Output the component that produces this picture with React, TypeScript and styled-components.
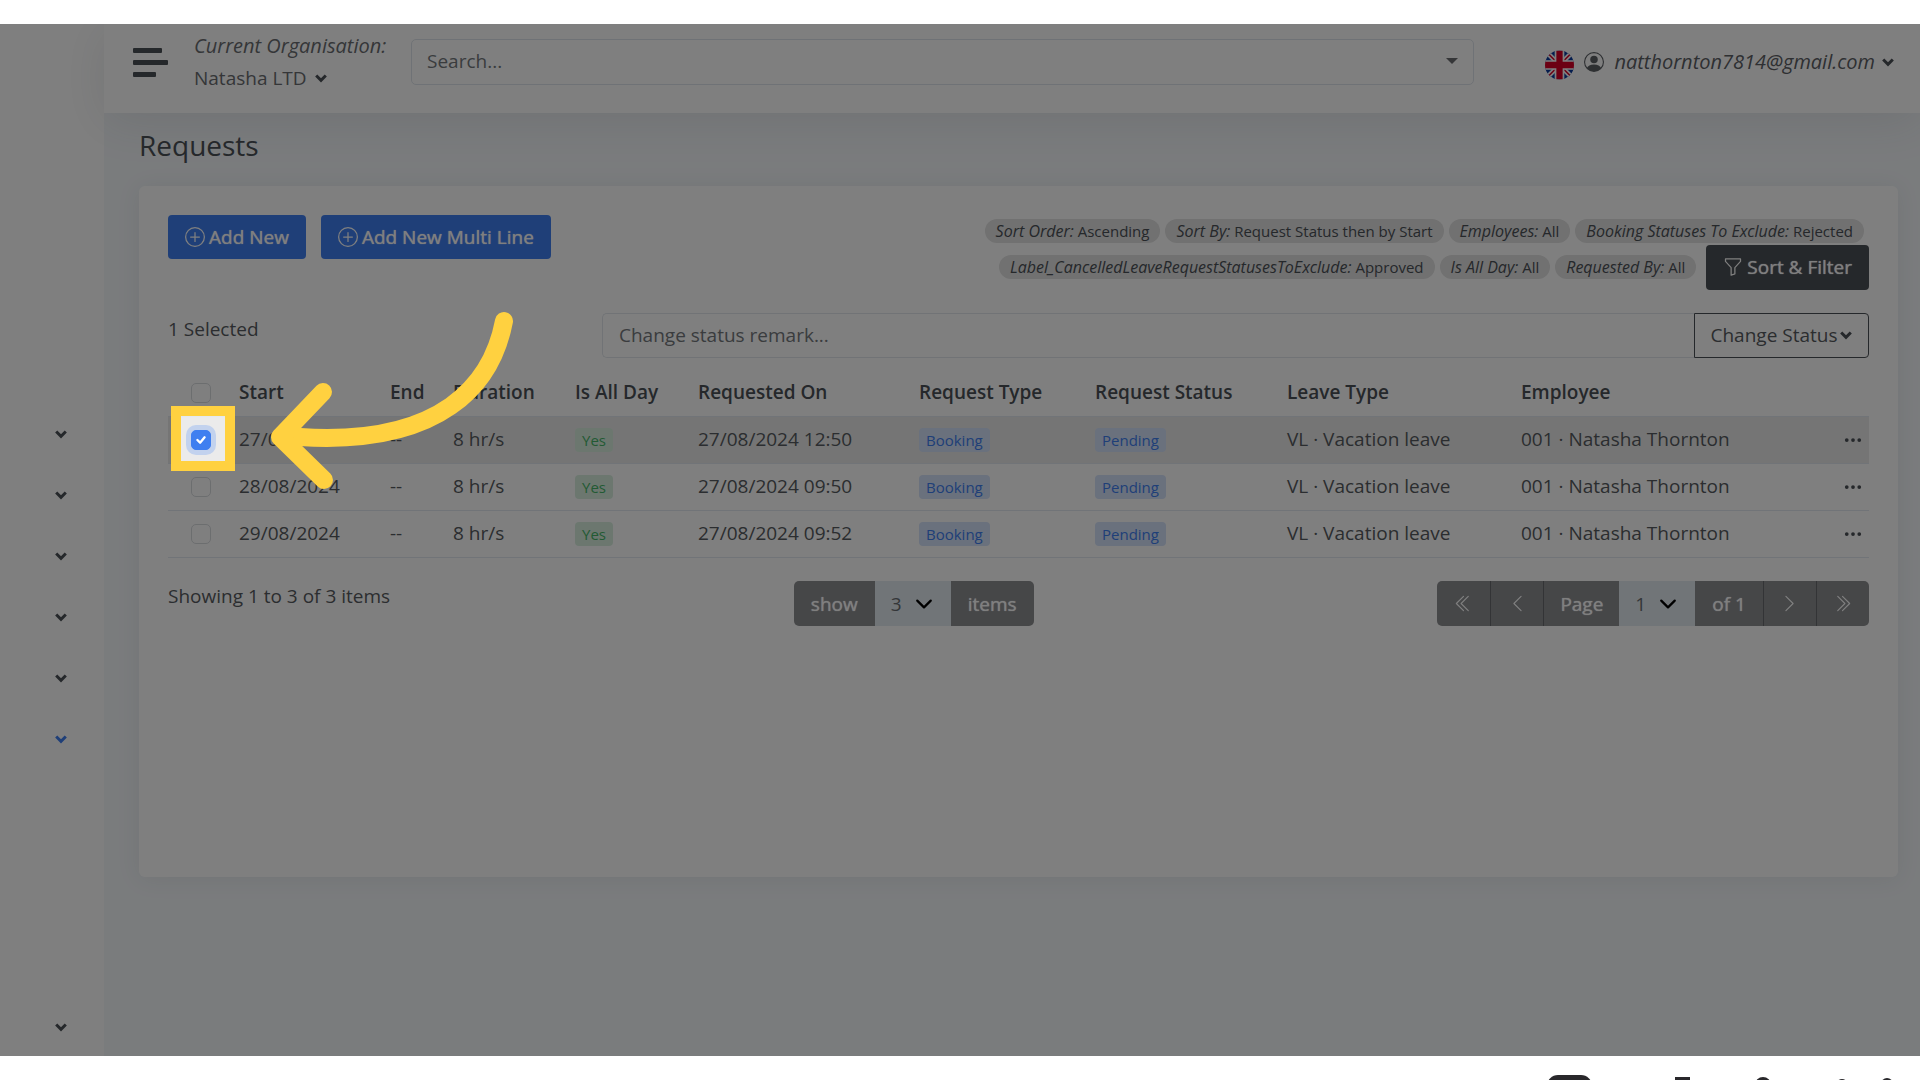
import React, { useState } from "react";
import styled, { createGlobalStyle } from "styled-components";
import {
  BsPlusCircle,
  BsFunnel,
  BsPersonCircle,
  BsThreeDots,
  BsChevronDoubleLeft,
  BsChevronLeft,
  BsChevronRight,
  BsChevronDoubleRight,
} from "react-icons/bs";

const font = `"Open Sans", "Noto Sans", sans-serif`;

const Global = createGlobalStyle`
  *, *::before, *::after { box-sizing: border-box; }
  body { margin: 0; background: #fff; font-family: ${font}; overflow: hidden; }
  button, input, select { font: inherit; color: inherit; }
`;

const Page = styled.div`
  display: flex;
  flex-direction: column;
  height: 100vh;
  padding-top: 24px;
  overflow: hidden;
  color: #575b60;
  font-size: 19px;
  line-height: 28px;
`;

const Screen = styled.div`
  position: relative;
  flex: 1;
  display: flex;
  min-height: 0;
  overflow: hidden;
  background: #f5f8fb;
`;

const Sidebar = styled.nav`
  flex: none;
  width: 104px;
  padding: 379px 31px 15px 48px;
  display: flex;
  flex-direction: column;
  background: #fff;
`;

const SideButton = styled.button<{ $active?: boolean; $last?: boolean }>`
  display: flex;
  align-items: center;
  justify-content: center;
  width: 25px;
  height: ${(p) => (p.$last ? 28 : 61)}px;
  padding: 0;
  border: 0;
  background: none;
  color: ${(p) => (p.$active ? "#3f7ff0" : "#4b5056")};
  margin-top: ${(p) => (p.$last ? "auto" : "0")};
`;

const Main = styled.div`
  flex: 1;
  min-width: 0;
  display: flex;
  flex-direction: column;
`;

const Header = styled.header`
  display: flex;
  align-items: flex-start;
  height: 89px;
  padding: 0 26px 0 29px;
  background: #fff;
  box-shadow: 0 8px 48px rgba(40, 50, 60, 0.1);
`;

const MenuButton = styled.button`
  display: flex;
  flex-direction: column;
  gap: 7px;
  width: 35px;
  margin: 24px 26px 0 0;
  padding: 0;
  border: 0;
  background: none;
`;

const MenuBar = styled.span<{ $w: number }>`
  width: ${(p) => p.$w}px;
  height: 5px;
  border-radius: 1px;
  background: #4b5056;
`;

const Organisation = styled.div`
  width: 217px;
  padding-top: 6px;
  line-height: 32px;
  color: #6a6d71;
  white-space: nowrap;
`;

const Italic = styled.em`
  display: block;
  font-size: 20px;
`;

const PlainButton = styled.button`
  display: flex;
  align-items: center;
  gap: 8px;
  padding: 0;
  border: 0;
  background: none;
  line-height: inherit;
  & > svg { color: #4b5056; }
`;

const SearchBox = styled.div`
  display: flex;
  align-items: center;
  flex: 1;
  height: 46px;
  margin: 15px 71px 0 0;
  padding: 0 15px 2px;
  border: 1px solid #dfe5ec;
  border-radius: 5px;
`;

const TextInput = styled.input`
  flex: 1;
  min-width: 0;
  padding: 0;
  border: 0;
  outline: 0;
  background: none;
  &::placeholder { color: #74787d; opacity: 1; }
`;

const Caret = styled.span`
  border: 6px solid transparent;
  border-top-color: #6a6d71;
  border-bottom: 0;
`;

const Account = styled.div`
  display: flex;
  align-items: center;
  gap: 10px;
  margin-top: 21px;
  height: 34px;
  color: #5c6065;
`;

const AccountButton = styled(PlainButton)`
  gap: 7px;
  font-size: 20px;
  font-style: italic;
`;

const FlagSlot = styled.span`
  display: flex;
  padding-top: 6px;
`;

const Content = styled.main`
  display: flex;
  flex-direction: column;
  flex: 1;
  padding: 13px 22px 179px 35px;
`;

const Title = styled.h1`
  margin: 0 0 22px;
  color: #4b5056;
  font-size: 28px;
  font-weight: 400;
  line-height: 38px;
`;

const Card = styled.section`
  flex: 1;
  padding: 28px 29px;
  border-radius: 6px;
  background: #fff;
  box-shadow: 0 2px 24px rgba(40, 50, 60, 0.08);
`;

const Toolbar = styled.div`
  display: flex;
  align-items: flex-start;
  justify-content: space-between;
`;

const ButtonRow = styled.div`
  display: flex;
  gap: 15px;
  padding-top: 1px;
`;

const Button = styled.button<{ $dark?: boolean }>`
  display: inline-flex;
  align-items: center;
  gap: 4px;
  height: ${(p) => (p.$dark ? 45 : 44)}px;
  padding: 0 17px 1px;
  border: 0;
  border-radius: 4px;
  background: ${(p) => (p.$dark ? "#4b5056" : "#3f7ff0")};
  color: #fff;
  font-weight: 500;
  text-shadow: 0 0 1px currentColor;
  white-space: nowrap;
`;

const Filters = styled.div`
  display: flex;
  flex-direction: column;
  align-items: flex-end;
  padding-top: 5px;
`;

const FilterLine = styled.div<{ $inset?: boolean }>`
  display: flex;
  align-items: center;
  gap: 5px;
  padding-right: ${(p) => (p.$inset ? 5 : 0)}px;
`;

const FilterAction = styled.div`
  padding: 2px 0 0 5px;
`;

const Pill = styled.span`
  height: 24px;
  padding: 0 11px;
  border-radius: 12px;
  background: #e2e2e2;
  color: #4b5056;
  font-size: 15px;
  line-height: 24px;
  white-space: nowrap;
  & > em { font-size: 16px; }
`;

const StatusRow = styled.div`
  display: flex;
  align-items: flex-start;
  margin-top: 23px;
`;

const Selected = styled.div`
  width: 434px;
  padding-top: 2px;
`;

const RemarkBox = styled.label`
  display: flex;
  flex: 1;
  height: 45px;
  padding: 0 16px 2px;
  border: 1px solid #e3e7ec;
  border-right: 0;
  border-radius: 5px 0 0 5px;
`;

const StatusButton = styled.button`
  display: flex;
  align-items: center;
  justify-content: center;
  gap: 3px;
  width: 175px;
  height: 45px;
  padding: 0 0 2px;
  border: 1px solid #4b5056;
  border-radius: 0 4px 4px 0;
  background: #fff;
  & > svg { color: #4b5056; }
`;

const Table = styled.table`
  width: 100%;
  margin-top: 11px;
  border-collapse: separate;
  border-spacing: 0;
  table-layout: fixed;
`;

const Th = styled.th`
  height: 48px;
  padding: 0 0 2px;
  border-bottom: 1px solid #e3e9f0;
  color: #4b5056;
  font-weight: 600;
  text-align: left;
  white-space: nowrap;
`;

const Tr = styled.tr<{ $selected?: boolean }>`
  background: ${(p) => (p.$selected ? "#ebebeb" : "transparent")};
`;

const Td = styled.td`
  height: 47px;
  padding: 0 0 3px;
  border-bottom: 1px solid #e3e9f0;
  white-space: nowrap;
`;

const CheckHead = styled(Th)`
  padding: 0 0 0 23px;
`;

const CheckCell = styled(Td)`
  padding: 0 0 0 23px;
`;

const EndCell = styled(Td)`
  padding-right: 6px;
  text-align: right;
`;

const Checkbox = styled.input`
  appearance: none;
  display: block;
  width: 20px;
  height: 20px;
  margin: 0;
  border: 1px solid #d9dcdf;
  border-radius: 5px;
  background: #fff;
  &:checked {
    border-color: #3f7ff0;
    background: #3f7ff0 url("data:image/svg+xml,%3Csvg xmlns='http://www.w3.org/2000/svg' viewBox='0 0 20 20'%3E%3Cpath fill='none' stroke='%23fff' stroke-width='2.6' stroke-linecap='round' stroke-linejoin='round' d='m6 10 3 3 5-6'/%3E%3C/svg%3E") center / 18px no-repeat;
    box-shadow: 0 0 0 5px #c2d2ee;
  }
`;

const Badge = styled.span<{ $green?: boolean }>`
  display: inline-block;
  padding: 0 7px;
  border-radius: 4px;
  background: ${(p) => (p.$green ? "#d9efdf" : "#d4e2fa")};
  color: ${(p) => (p.$green ? "#46b569" : "#3f7ff0")};
  font-size: 15px;
  line-height: 24px;
  vertical-align: middle;
`;

const IconButton = styled.button`
  padding: 0;
  border: 0;
  background: none;
  color: #4b5056;
  line-height: 0;
  vertical-align: middle;
`;

const TableFooter = styled.div`
  display: flex;
  align-items: flex-start;
  justify-content: space-between;
  margin-top: 23px;
`;

const Summary = styled.span`
  padding-top: 1px;
`;

const Group = styled.div`
  display: flex;
  height: 45px;
  overflow: hidden;
  border-radius: 5px;
`;

const PageButton = styled.button`
  display: flex;
  align-items: center;
  justify-content: center;
  width: 53px;
  padding: 0;
  border: 0;
  border-left: 1px solid #66696c;
  background: #8c8e91;
  color: #fff;
  &:first-child { border-left: 0; }
`;

const GroupText = styled.span`
  display: flex;
  align-items: center;
  padding: 0 17px;
  background: #8c8e91;
  color: #fff;
  text-shadow: 0 0 1px currentColor;
  ${PageButton} + & { border-left: 1px solid #66696c; padding: 0 16px; }
`;

const SelectWrap = styled.span`
  display: grid;
  align-items: center;
  width: 76px;
  background: #e2eaf0;
  color: #696d72;
  & > * { grid-area: 1 / 1; }
  & > svg { justify-self: end; margin-right: 18px; pointer-events: none; }
`;

const Select = styled.select`
  appearance: none;
  width: 100%;
  height: 100%;
  padding: 0 16px;
  border: 0;
  background: none;
`;

const Spotlight = styled.div`
  position: absolute;
  left: 171px;
  top: 382px;
  width: 64px;
  height: 65px;
  border: 10px solid #ffd140;
  box-shadow: 0 0 0 3000px rgba(0, 0, 0, 0.5);
  pointer-events: none;
`;

const Arrow = styled.svg`
  position: absolute;
  left: 260px;
  top: 276px;
  pointer-events: none;
`;

const Footer = styled.footer`
  flex: none;
  display: flex;
  justify-content: flex-end;
  height: 24px;
  overflow: hidden;
  background: #fff;
`;

const Chevron = () => (
  <svg width="12" height="12" viewBox="0 0 12 12" fill="none" stroke="currentColor" strokeWidth="3" aria-hidden="true">
    <path d="M1.200 3.500 6 8.300l4.800-4.800" />
  </svg>
);

const SelectArrow = () => (
  <svg width="18" height="18" viewBox="0 0 16 16" fill="none" stroke="#000" strokeWidth="2" strokeLinecap="round" strokeLinejoin="round" aria-hidden="true">
    <path d="m2 5 6 6 6-6" />
  </svg>
);

const Flag = () => (
  <svg width="29" height="30" viewBox="0 0 60 60" role="img" aria-label="English">
    <clipPath id="round"><circle cx="30" cy="30" r="30" /></clipPath>
    <g clipPath="url(#round)">
      <path fill="#0a3a9c" d="M0 0h60v60H0z" />
      <path stroke="#fff" strokeWidth="10" d="m0 0 60 60M60 0 0 60" />
      <path stroke="#d80027" strokeWidth="3" d="m0 0 60 60M60 0 0 60" />
      <path stroke="#fff" strokeWidth="20" d="M30 0v60M0 30h60" />
      <path stroke="#d80027" strokeWidth="13" d="M30 0v60M0 30h60" />
    </g>
  </svg>
);

const columns = [
  { name: "Start", width: 151 },
  { name: "End", width: 63 },
  { name: "Duration", width: 122 },
  { name: "Is All Day", width: 123 },
  { name: "Requested On", width: 221 },
  { name: "Request Type", width: 176 },
  { name: "Request Status", width: 192 },
  { name: "Leave Type", width: 234 },
  { name: "Employee", width: 290 },
];

const rows = [
  { start: "27/08/2024", on: "27/08/2024 12:50" },
  { start: "28/08/2024", on: "27/08/2024 09:50" },
  { start: "29/08/2024", on: "27/08/2024 09:52" },
];

const filterLines = [
  [
    ["Sort Order:", "Ascending"],
    ["Sort By:", "Request Status then by Start"],
    ["Employees:", "All"],
    ["Booking Statuses To Exclude:", "Rejected"],
  ],
  [
    ["Label_CancelledLeaveRequestStatusesToExclude:", "Approved"],
    ["Is All Day:", "All"],
    ["Requested By:", "All"],
  ],
];

const Pills = ({ items }: { items: string[][] }) => (
  <>
    {items.map(([label, value]) => (
      <Pill key={label}><em>{label}</em> {value}</Pill>
    ))}
  </>
);

const SideMenu = () => (
  <Sidebar aria-label="Main menu">
    {["Organisation", "Employees", "Leave", "Attendance", "Payroll"].map((n) => (
      <SideButton key={n} aria-label={n}><Chevron /></SideButton>
    ))}
    <SideButton $active aria-label="Requests"><Chevron /></SideButton>
    <SideButton $last aria-label="Settings"><Chevron /></SideButton>
  </Sidebar>
);

export default function App() {
  const [checked, setChecked] = useState([true, false, false]);
  const toggle = (i: number) => setChecked(checked.map((c, n) => (n === i ? !c : c)));

  return (
    <Page>
      <Global />
      <Screen>
        <SideMenu />
        <Main>
          <Header>
            <MenuButton aria-label="Toggle menu">
              <MenuBar $w={29} />
              <MenuBar $w={35} />
              <MenuBar $w={23} />
            </MenuButton>
            <Organisation>
              <Italic>Current Organisation:</Italic>
              <PlainButton>Natasha LTD <Chevron /></PlainButton>
            </Organisation>
            <SearchBox>
              <TextInput aria-label="Search" placeholder="Search..." />
              <Caret />
            </SearchBox>
            <Account>
              <FlagSlot><Flag /></FlagSlot>
              <BsPersonCircle size={20} />
              <AccountButton>natthornton7814@gmail.com <Chevron /></AccountButton>
            </Account>
          </Header>
          <Content>
            <Title>Requests</Title>
            <Card>
              <Toolbar>
                <ButtonRow>
                  <Button><BsPlusCircle size={20} />Add New</Button>
                  <Button><BsPlusCircle size={20} />Add New Multi Line</Button>
                </ButtonRow>
                <Filters>
                  <FilterLine $inset><Pills items={filterLines[0]} /></FilterLine>
                  <FilterLine>
                    <Pills items={filterLines[1]} />
                    <FilterAction><Button $dark><BsFunnel size={20} />Sort &amp; Filter</Button></FilterAction>
                  </FilterLine>
                </Filters>
              </Toolbar>
              <StatusRow>
                <Selected>1 Selected</Selected>
                <RemarkBox><TextInput aria-label="Change status remark" placeholder="Change status remark..." /></RemarkBox>
                <StatusButton>Change Status<Chevron /></StatusButton>
              </StatusRow>
              <Table>
                <colgroup>
                  <col style={{ width: 71 }} />
                  {columns.map((c) => <col key={c.name} style={{ width: c.width }} />)}
                  <col />
                </colgroup>
                <thead>
                  <tr>
                    <CheckHead><Checkbox type="checkbox" aria-label="Select all" /></CheckHead>
                    {columns.map((c) => <Th key={c.name}>{c.name}</Th>)}
                    <Th aria-label="Actions" />
                  </tr>
                </thead>
                <tbody>
                  {rows.map((r, i) => (
                    <Tr key={r.start} $selected={checked[i]}>
                      <CheckCell>
                        <Checkbox type="checkbox" aria-label={`Select ${r.start}`} checked={checked[i]} onChange={() => toggle(i)} />
                      </CheckCell>
                      <Td>{r.start}</Td>
                      <Td>--</Td>
                      <Td>8 hr/s</Td>
                      <Td><Badge $green>Yes</Badge></Td>
                      <Td>{r.on}</Td>
                      <Td><Badge>Booking</Badge></Td>
                      <Td><Badge>Pending</Badge></Td>
                      <Td>VL · Vacation leave</Td>
                      <Td>001 · Natasha Thornton</Td>
                      <EndCell><IconButton aria-label="Row actions"><BsThreeDots size={20} /></IconButton></EndCell>
                    </Tr>
                  ))}
                </tbody>
              </Table>
              <TableFooter>
                <Summary>Showing 1 to 3 of 3 items</Summary>
                <Group>
                  <GroupText>show</GroupText>
                  <SelectWrap>
                    <Select aria-label="Items per page" defaultValue="3"><option>3</option></Select>
                    <SelectArrow />
                  </SelectWrap>
                  <GroupText>items</GroupText>
                </Group>
                <Group>
                  <PageButton aria-label="First page"><BsChevronDoubleLeft size={19} /></PageButton>
                  <PageButton aria-label="Previous page"><BsChevronLeft size={19} /></PageButton>
                  <GroupText>Page</GroupText>
                  <SelectWrap>
                    <Select aria-label="Page number" defaultValue="1"><option>1</option></Select>
                    <SelectArrow />
                  </SelectWrap>
                  <GroupText>of 1</GroupText>
                  <PageButton aria-label="Next page"><BsChevronRight size={19} /></PageButton>
                  <PageButton aria-label="Last page"><BsChevronDoubleRight size={19} /></PageButton>
                </Group>
              </TableFooter>
            </Card>
          </Content>
        </Main>
        <Spotlight />
        <Arrow width="270" height="200" viewBox="260 300 270 200" fill="none" stroke="#ffd140" strokeWidth="18" strokeLinecap="round" strokeLinejoin="round" aria-hidden="true">
          <path d="M504 321C492 384 442 446 300 437L281 437" />
          <path d="M323 392 280 437 324 480" />
        </Arrow>
      </Screen>
      <Footer>
        <svg width="400" height="24" viewBox="1520 1056 400 24" fill="#29282b" aria-hidden="true">
          <rect x="1547" y="1075" width="45" height="45" rx="11" />
          <path d="M1675 1077h15v20h-15z" />
          <circle cx="1763" cy="1085" r="8" />
          <circle cx="1842" cy="1085" r="6" />
          <circle cx="1887" cy="1084" r="6" />
        </svg>
      </Footer>
    </Page>
  );
}
